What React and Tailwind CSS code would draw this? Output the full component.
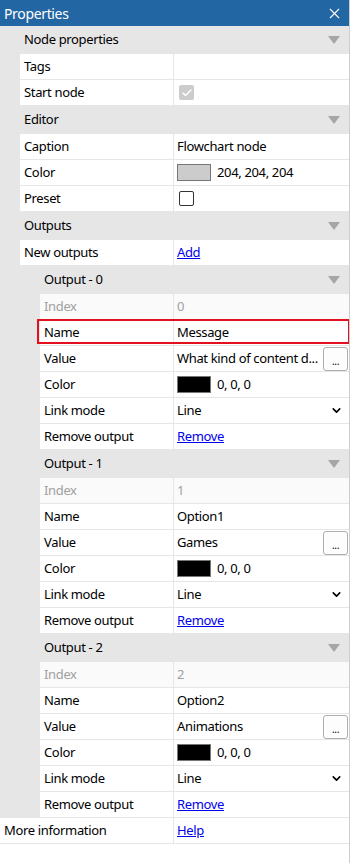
import { X, ChevronDown, Check } from "lucide-react";

const labelW = ["w-[174px]", "w-[154px]", "w-[134px]"];
const indent = ["", "pl-[20px]", "pl-[40px]"];

function Row({ depth, label, disabled, highlight, children }) {
  return (
    <div className={`flex h-[26px] ${indent[depth]} bg-[#e6e6e6]`}>
      <div
        className={`relative flex flex-1 min-w-0 border-b border-[#e6e6e6] ${
          disabled ? "bg-[#fafafa] text-[#a0a0a0]" : "bg-white text-black"
        }`}
      >
        <div className={`${labelW[depth]} shrink-0 flex items-center pl-1 border-r border-[#e6e6e6]`}>
          {label}
        </div>
        <div className="flex-1 min-w-0 flex items-center pl-[3px]">{children}</div>
        {highlight && (
          <div className="absolute -left-[3px] -right-px -top-px bottom-[1px] border-2 border-[#e3101e] pointer-events-none" />
        )}
      </div>
    </div>
  );
}

function Triangle() {
  return (
    <svg width="12" height="8" viewBox="0 0 12 8" className="mr-[9px]">
      <path d="M0 0 L12 0 L6 8 Z" fill="#a6a6a6" />
    </svg>
  );
}

function Category({ depth, title, children }) {
  return (
    <div className="bg-[#e6e6e6]">
      <div className={`flex h-[28px] items-center justify-between ${depth === 0 ? "pl-[24px]" : "pl-[44px]"}`}>
        <span>{title}</span>
        <Triangle />
      </div>
      {children}
    </div>
  );
}

function Swatch({ color, text }) {
  return (
    <div className="flex items-center gap-[6px]">
      <div className={`w-[34px] h-[17px] border border-[#767676] ${color}`} />
      <span>{text}</span>
    </div>
  );
}

function Ellipsis({ text }) {
  return (
    <div className="flex items-center w-full min-w-0">
      <span className="flex-1 min-w-0 whitespace-nowrap">{text}</span>
      <div className="w-[25px] h-[24px] shrink-0 ml-[2px] mr-px border border-[#adadad] rounded-[3px] bg-[#fdfdfd] flex items-end justify-center pb-[4px] text-[10px] leading-none">
        ...
      </div>
    </div>
  );
}

function LinkMode() {
  return (
    <div className="flex items-center w-full justify-between pr-[6px]">
      <span>Line</span>
      <ChevronDown size={13} strokeWidth={3} color="#000" />
    </div>
  );
}

function A({ children }) {
  return <span className="text-[#0000ee] underline">{children}</span>;
}

function Output({ n, name, value, highlight }) {
  return (
    <Category depth={1} title={`Output - ${n}`}>
      <Row depth={2} label="Index" disabled>
        {n}
      </Row>
      <Row depth={2} label="Name" highlight={highlight}>
        {name}
      </Row>
      <Row depth={2} label="Value">
        <Ellipsis text={value} />
      </Row>
      <Row depth={2} label="Color">
        <Swatch color="bg-black" text="0, 0, 0" />
      </Row>
      <Row depth={2} label="Link mode">
        <LinkMode />
      </Row>
      <Row depth={2} label="Remove output">
        <A>Remove</A>
      </Row>
    </Category>
  );
}

export default function App() {
  return (
    <div
      className="w-[350px] h-[863px] bg-white border-r border-[#cdcdcd] text-[13px] tracking-[-0.35px] overflow-hidden"
      style={{ fontFamily: '"Noto Sans", "Open Sans", sans-serif' }}
    >
      <div className="h-[26px] bg-[#2266a4] flex items-center justify-between pl-1 pr-[6px] text-white text-[14px]">
        <span>Properties</span>
        <X size={17} strokeWidth={1.6} />
      </div>

      <Category depth={0} title="Node properties">
        <Row depth={1} label="Tags" />
        <Row depth={1} label="Start node">
          <div className="w-[15px] h-[15px] ml-[2px] rounded-[2px] bg-[#cccccc] flex items-center justify-center">
            <Check size={12} strokeWidth={3} color="#fff" />
          </div>
        </Row>
      </Category>

      <Category depth={0} title="Editor">
        <Row depth={1} label="Caption">Flowchart node</Row>
        <Row depth={1} label="Color">
          <Swatch color="bg-[#cccccc]" text="204, 204, 204" />
        </Row>
        <Row depth={1} label="Preset">
          <div className="w-[15px] h-[15px] ml-[2px] rounded-[2px] border border-[#333] bg-white" />
        </Row>
      </Category>

      <Category depth={0} title="Outputs">
        <Row depth={1} label="New outputs">
          <A>Add</A>
        </Row>
        <Output n={0} name="Message" value="What kind of content d..." highlight />
        <Output n={1} name="Option1" value="Games" />
        <Output n={2} name="Option2" value="Animations" />
      </Category>

      <Row depth={0} label="More information">
        <A>Help</A>
      </Row>
    </div>
  );
}
